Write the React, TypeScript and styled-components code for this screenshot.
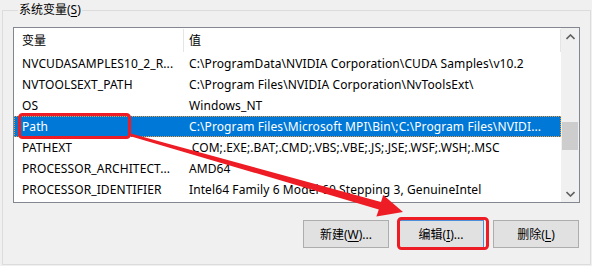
import styled, { createGlobalStyle } from "styled-components";

const GlobalStyle = createGlobalStyle`
    html, body {
        margin: 0;
        padding: 0;
        background: #f0f0f0;
        width: 592px;
        height: 266px;
        overflow: hidden;
    }
    body {
        font-family: "Noto Sans", "Noto Sans CJK SC", sans-serif;
        font-size: 12px;
        color: #000;
    }
`

const Page = styled.div`
    position: relative;
    width: 592px;
    height: 266px;
    box-sizing: border-box;
    padding: 0 1px 1px 2px;
`

const Group = styled.fieldset`
    margin: 0;
    height: 100%;
    box-sizing: border-box;
    border: 1px solid #dcdcdc;
    padding: 0 10px 15px 10px;
    display: flex;
    flex-direction: column;
`

const Legend = styled.legend`
    margin-left: 5px;
    padding: 0 1px;
    line-height: 20px;
    font-size: 12px;
`

const Key = styled.span`
    text-decoration: underline;
    text-underline-offset: 2px;
`

const ListBox = styled.div`
    margin-top: 7px;
    height: 176px;
    box-sizing: border-box;
    border: 1px solid #828790;
    background: #fff;
    display: flex;
`

const ListArea = styled.div`
    width: 547px;
    display: flex;
    flex-direction: column;
    overflow: hidden;
`

const HeaderRow = styled.div`
    display: grid;
    grid-template-columns: 170px 377px;
    height: 25px;
`

const HeaderCell = styled.div<{ $pad: number }>`
    padding-left: ${(p) => p.$pad}px;
    line-height: 25px;
    box-sizing: border-box;
    position: relative;

    &::after {
        content: "";
        position: absolute;
        right: 0;
        top: 1px;
        bottom: 1px;
        width: 1px;
        background: #e5e5e5;
    }
`

const Row = styled.div<{ $selected?: boolean }>`
    display: grid;
    grid-template-columns: 170px 377px;
    height: 21px;
    line-height: 21px;
    background: ${(p) => (p.$selected ? "#0078d7" : "transparent")};
    color: ${(p) => (p.$selected ? "#fff" : "#000")};
    outline: ${(p) => (p.$selected ? "1px dotted #f29b38" : "none")};
    outline-offset: -1px;
    white-space: nowrap;
    letter-spacing: 0.1px;
`

const Cell = styled.div<{ $pad: number }>`
    padding-left: ${(p) => p.$pad}px;
    overflow: hidden;
`

const ScrollBar = styled.div`
    width: 18px;
    background: #f0f0f0;
    display: flex;
    flex-direction: column;
`

const ScrollArrow = styled.div`
    height: 17px;
    display: flex;
    align-items: center;
    justify-content: center;
`

const Track = styled.div`
    flex: 1;
    padding-top: 77px;
`

const Thumb = styled.div`
    height: 28px;
    margin: 0 1px;
    background: #cdcdcd;
`

const ButtonRow = styled.div`
    margin-top: 17px;
    display: flex;
    justify-content: flex-end;
    gap: 9px;
    padding-right: 1px;
`

const Button = styled.button<{ $default?: boolean }>`
    width: 86px;
    height: 28px;
    box-sizing: border-box;
    background: #e1e1e1;
    border: 1px solid ${(p) => (p.$default ? "#4a8fd8" : "#adadad")};
    font-family: inherit;
    font-size: 12px;
    color: #000;
    padding: 0;
`

const Overlay = styled.svg`
    position: absolute;
    left: 0;
    top: 0;
    pointer-events: none;
`

const rows = [
    ["NVCUDASAMPLES10_2_R...", "C:\\ProgramData\\NVIDIA Corporation\\CUDA Samples\\v10.2"],
    ["NVTOOLSEXT_PATH", "C:\\Program Files\\NVIDIA Corporation\\NvToolsExt\\"],
    ["OS", "Windows_NT"],
    ["Path", "C:\\Program Files\\Microsoft MPI\\Bin\\;C:\\Program Files\\NVIDI..."],
    ["PATHEXT", ".COM;.EXE;.BAT;.CMD;.VBS;.VBE;.JS;.JSE;.WSF;.WSH;.MSC"],
    ["PROCESSOR_ARCHITECT...", "AMD64"],
    ["PROCESSOR_IDENTIFIER", "Intel64 Family 6 Model 60 Stepping 3, GenuineIntel"],
];

function Chevron({ down }: { down?: boolean }) {
    return (
        <svg width="9" height="6" viewBox="0 0 9 6">
            <path
                d={down ? "M0.5 1 L4.5 5 L8.5 1" : "M0.5 5 L4.5 1 L8.5 5"}
                fill="none"
                stroke="#606060"
                strokeWidth="1.6"
            />
        </svg>
    );
}

export default function App() {
    return (
        <>
            <GlobalStyle/>
            <Page>
                <Group>
                    <Legend>系统变量(<Key>S</Key>)</Legend>
                    <ListBox>
                        <ListArea>
                            <HeaderRow>
                                <HeaderCell $pad={8}>变量</HeaderCell>
                                <HeaderCell $pad={5}>值</HeaderCell>
                            </HeaderRow>
                            {rows.map(([name, value]) => (
                                <Row key={name} $selected={name === "Path"}>
                                    <Cell $pad={8}>{name}</Cell>
                                    <Cell $pad={5}>{value}</Cell>
                                </Row>
                            ))}
                        </ListArea>
                        <ScrollBar>
                            <ScrollArrow><Chevron/></ScrollArrow>
                            <Track><Thumb/></Track>
                            <ScrollArrow><Chevron down/></ScrollArrow>
                        </ScrollBar>
                    </ListBox>
                    <ButtonRow>
                        <Button>新建(<Key>W</Key>)...</Button>
                        <Button $default>编辑(<Key>I</Key>)...</Button>
                        <Button>删除(<Key>L</Key>)</Button>
                    </ButtonRow>
                </Group>
                {/* red annotations drawn over the dialog */}
                <Overlay width="592" height="266" viewBox="0 0 592 266">
                    <rect x="19.5" y="114.5" width="110" height="23" rx="3" fill="none" stroke="#ee1c24" strokeWidth="3"/>
                    <rect x="398.5" y="218.5" width="89" height="30" rx="3" fill="none" stroke="#ee1c24" strokeWidth="3"/>
                    <polygon
                        fill="#ee1c24"
                        points="130.7,133.6 131.3,136.4 378.8,209.4 376.4,216.5 403,212 383.2,194.9 381,202"
                    />
                </Overlay>
            </Page>
        </>
    );
}
